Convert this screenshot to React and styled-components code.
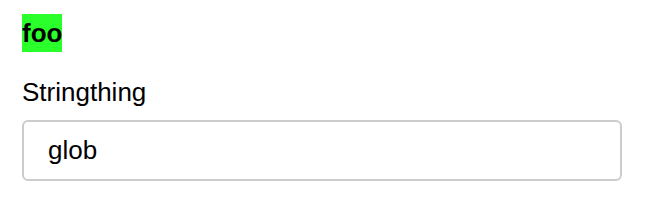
import React from "react";
import styled, { createGlobalStyle } from "styled-components";

const Global = createGlobalStyle`
  html, body {
    margin: 0;
    padding: 0;
    background: #fff;
    font-family: "Liberation Sans", Arial, sans-serif;
    color: #000;
  }
`;

const Page = styled.div`
  padding: 14px 22px 0 22px;
  display: flex;
  flex-direction: column;
  align-items: flex-start;
`;

const Title = styled.span`
  background: #2bff2b;
  font-weight: bold;
  font-size: 26px;
  line-height: 38px;
`;

const Field = styled.label`
  display: flex;
  flex-direction: column;
  margin-top: 25px;
  font-size: 26px;
  line-height: 30px;
`;

const Input = styled.input`
  box-sizing: border-box;
  margin-top: 13px;
  width: 600px;
  height: 61px;
  padding: 0 24px;
  border: 2px solid #cccccc;
  border-radius: 6px;
  font-family: "Liberation Sans", Arial, sans-serif;
  font-size: 26px;
  color: #000;
  background: #fff;
  outline: none;
`;

const App = () => {
  const [value, setValue] = React.useState("glob");

  return (
    <>
      <Global />
      <Page>
        <Title>foo</Title>
        <Field>
          Stringthing
          <Input value={value} onChange={(e) => setValue(e.target.value)} />
        </Field>
      </Page>
    </>
  );
};

export default App;
